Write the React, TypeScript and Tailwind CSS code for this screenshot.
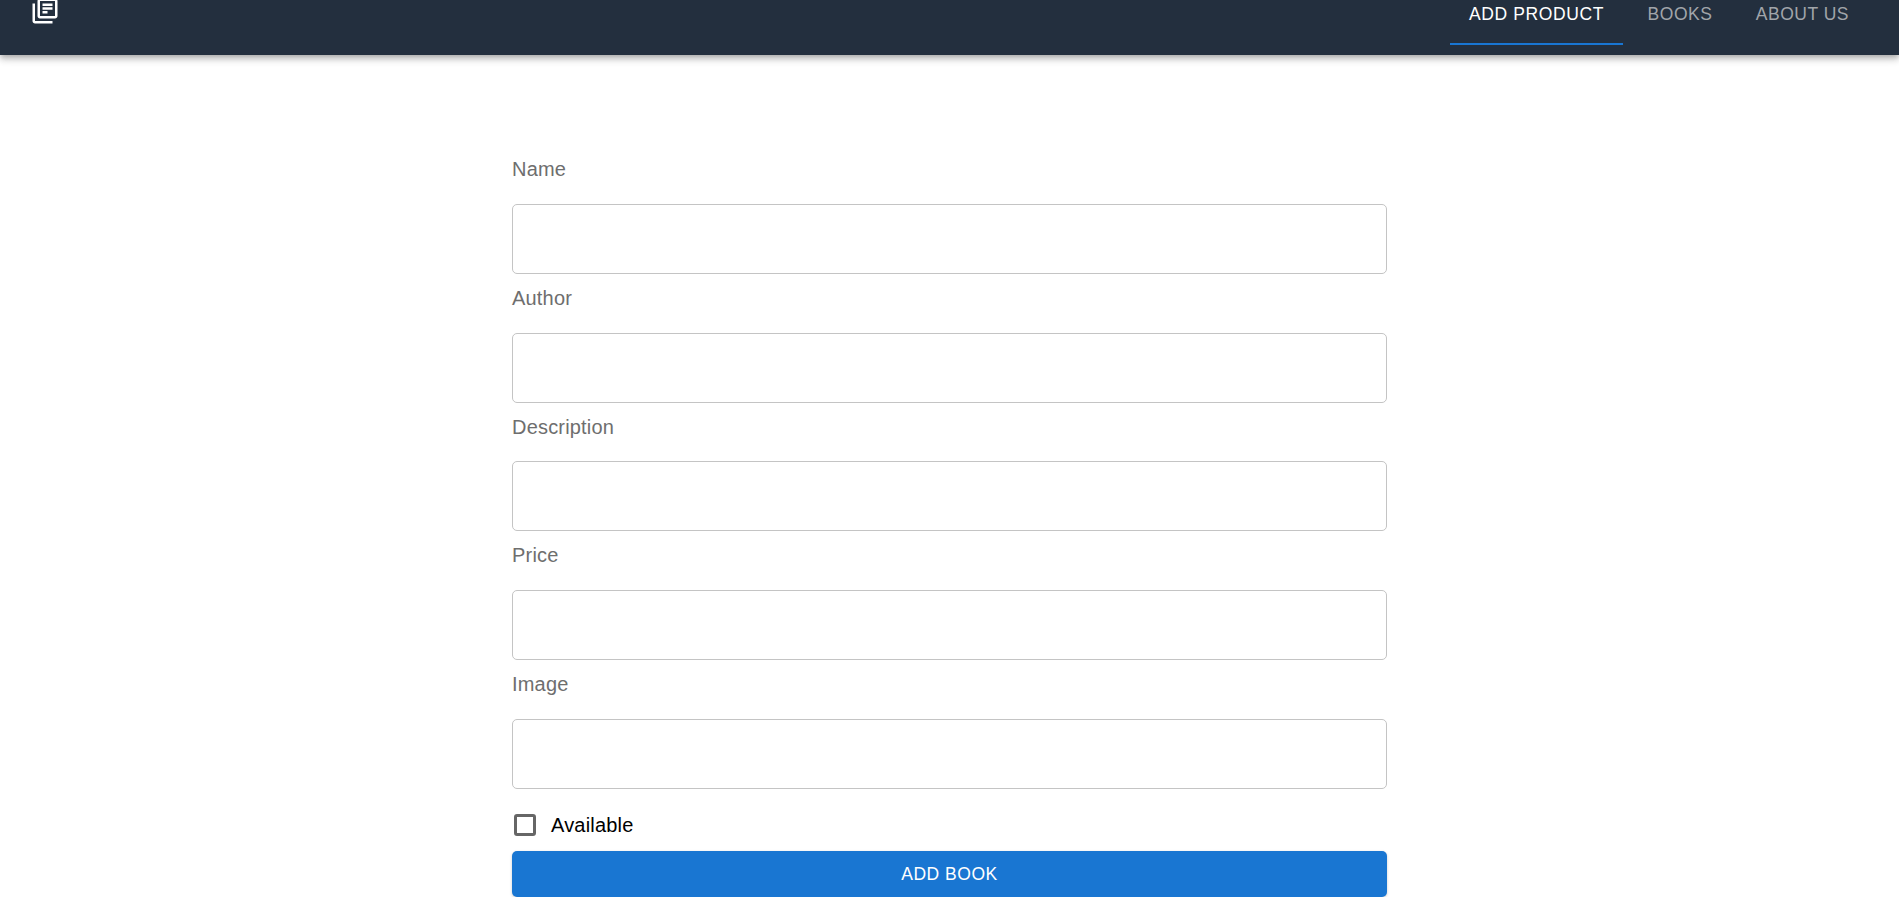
import React from 'react';

const fields = ['Name', 'Author', 'Description', 'Price', 'Image'];

const BooksIcon = () => (
  <svg viewBox="0 0 24 24" fill="currentColor" className="w-[30px] h-[30px] -mt-[4px] text-white">
    <path d="M4 6H2v14c0 1.1.9 2 2 2h14v-2H4V6zm16-4H8c-1.1 0-2 .9-2 2v12c0 1.1.9 2 2 2h12c1.1 0 2-.9 2-2V4c0-1.1-.9-2-2-2zm0 14H8V4h12v12zM10 9h8v2h-8zm0 3h4v2h-4zm0-6h8v2h-8z" />
  </svg>
);

const App: React.FC = () => {
  return (
    <div className="min-h-screen bg-white font-['Liberation_Sans',Arial,sans-serif]">
      <header className="h-[55px] bg-[#232f3e] flex justify-between pl-[30px] pr-[30px] shadow-[0_2px_5px_-1px_rgba(0,0,0,0.2),0_5px_6px_0_rgba(0,0,0,0.14),0_1px_12px_0_rgba(0,0,0,0.12)] relative z-10">
        <BooksIcon />
        <nav className="flex items-start text-[17.5px] leading-[28px] tracking-[0.5px] text-[#a1a5aa]">
          <a className="h-[45px] pl-[18.5px] pr-[18.5px] tracking-[0.62px] text-white border-b-2 border-[#1976d2]">ADD PRODUCT</a>
          <a className="h-[45px] pl-[25px] pr-[24px]">BOOKS</a>
          <a className="h-[45px] pl-[19.5px] pr-[20px]">ABOUT US</a>
        </nav>
      </header>

      <main className="w-[875px] mx-auto pt-[90px]">
        <form>
          {fields.map((field) => (
            <div key={field}>
              <label className="block pt-[10px] pb-[20.75px] text-[20px] leading-[28px] tracking-[0.19px] text-[#6e6e6e]">{field}</label>
              <input type="text" className="block w-full h-[70px] border border-[#c4c4c4] rounded-[5px] bg-white" />
            </div>
          ))}
          <label className="flex items-center h-[30px] mt-[21px] mb-[11px] pl-[2px] text-[20px] tracking-[0.19px] text-black">
            <input type="checkbox" className="appearance-none w-[22px] h-[22px] border-[3px] border-[#666666] rounded-[3px]" />
            <span className="ml-[15px]">Available</span>
          </label>
          <button type="button" className="block w-full h-[46px] bg-[#1976d2] text-white text-[17.5px] tracking-[0.5px] rounded-[5px] shadow-[0_1px_3px_rgba(0,0,0,0.2)]">
            ADD BOOK
          </button>
        </form>
      </main>
    </div>
  );
};

export default App;
